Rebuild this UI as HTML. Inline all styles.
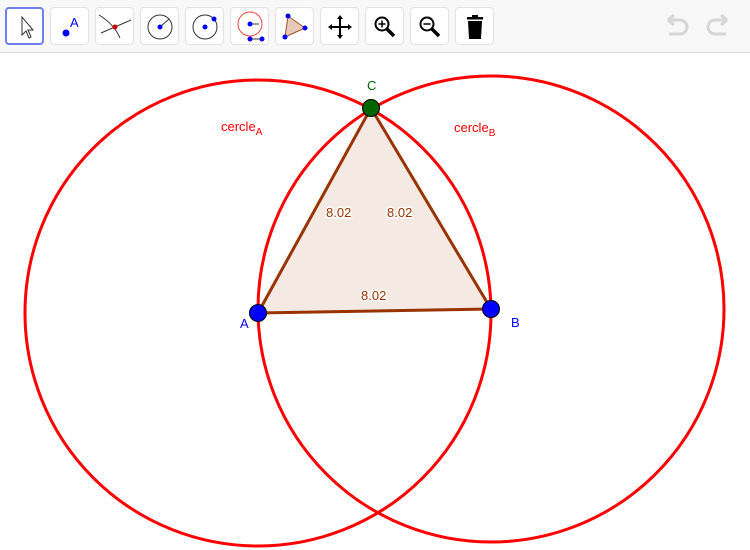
<!DOCTYPE html>
<html><head><style>
html,body{margin:0;padding:0;width:750px;height:550px;overflow:hidden;background:#fff;font-family:"Liberation Sans",sans-serif}
#tb{position:absolute;left:0;top:0;width:750px;height:52px;background:#f8f8f8;border-bottom:1px solid #ddd}
.b{position:absolute;top:7px;width:39px;height:38px;background:#fff;border:1px solid #e2e2e2;border-radius:4px;box-sizing:border-box}
.b svg{position:absolute;left:0;top:0}
</style></head><body>
<div id="tb">
<div class="b" style="left:5px;border:2px solid #6f7ff0"><svg width="36" height="35"><path d="M15 8 L15 26 L19 22 L22 29 L24 28 L21 21 L26 21 Z" fill="#fff" stroke="#333" stroke-width="1"/></svg></div>
<div class="b" style="left:50px"><svg width="38" height="37"><circle cx="15" cy="25" r="3.5" fill="#00f"/><text x="19" y="19" font-size="13" fill="#00f" font-family="Liberation Sans">A</text></svg></div>
<div class="b" style="left:95px"><svg width="38" height="37"><path d="M3 7 Q18 16 24 30" stroke="#333" fill="none"/><path d="M5 25 L35 12" stroke="#333"/><circle cx="19" cy="19" r="2.5" fill="#c00"/></svg></div>
<div class="b" style="left:140px"><svg width="38" height="37"><circle cx="19" cy="19" r="12" fill="none" stroke="#333"/><path d="M19 19 L28 11" stroke="#333"/><circle cx="19" cy="19" r="2.5" fill="#00f"/></svg></div>
<div class="b" style="left:185px"><svg width="38" height="37"><circle cx="19" cy="19" r="12" fill="none" stroke="#333"/><circle cx="19" cy="19" r="2.5" fill="#00f"/><circle cx="28" cy="11" r="2.5" fill="#00f"/></svg></div>
<div class="b" style="left:230px"><svg width="38" height="37"><circle cx="19" cy="16" r="12" fill="none" stroke="#f44"/><path d="M19 16 L28 16" stroke="#333"/><circle cx="19" cy="16" r="2.5" fill="#00f"/><path d="M19 31 L31 31" stroke="#333"/><circle cx="19" cy="31" r="2.5" fill="#00f"/><circle cx="31" cy="31" r="2.5" fill="#00f"/></svg></div>
<div class="b" style="left:275px"><svg width="38" height="37"><path d="M12 8 L29 20 L9 29 Z" fill="#e8c9b8" stroke="#a0522d"/><circle cx="12" cy="8" r="2.5" fill="#00f"/><circle cx="29" cy="20" r="2.5" fill="#00f"/><circle cx="9" cy="29" r="2.5" fill="#00f"/></svg></div>
<div class="b" style="left:320px"><svg width="38" height="37"><path d="M19 9 V29 M9 19 H29" stroke="#000" stroke-width="2"/><path d="M19 7 L16 11 H22Z M19 31 L16 27 H22Z M7 19 L11 16 V22Z M31 19 L27 16 V22Z" fill="#000"/></svg></div>
<div class="b" style="left:365px"><svg width="38" height="37"><circle cx="16" cy="16" r="6.5" fill="none" stroke="#000" stroke-width="2"/><path d="M12.5 16 H19.5 M16 12.5 V19.5" stroke="#000" stroke-width="1.5"/><path d="M21 21 L28 28" stroke="#000" stroke-width="3.5"/></svg></div>
<div class="b" style="left:410px"><svg width="38" height="37"><circle cx="16" cy="16" r="6.5" fill="none" stroke="#000" stroke-width="2"/><path d="M12.5 16 H19.5" stroke="#000" stroke-width="1.5"/><path d="M21 21 L28 28" stroke="#000" stroke-width="3.5"/></svg></div>
<div class="b" style="left:455px"><svg width="38" height="37"><rect x="11" y="9" width="16" height="2.5" fill="#000"/><rect x="16" y="7" width="6" height="3" fill="#000"/><path d="M12 13 H26 L25 31 H13 Z" fill="#000"/></svg></div>
<svg style="position:absolute;left:660px;top:12px" width="80" height="30"><path d="M8 8 H20 A7 7 0 0 1 20 22 H9 M8 8 L14 3 M8 8 L14 13" stroke="#d6d6d6" stroke-width="3" fill="none"/><path d="M67 8 H55 A7 7 0 0 0 55 22 H66 M67 8 L61 3 M67 8 L61 13" stroke="#d6d6d6" stroke-width="3" fill="none"/></svg>
</div>
<svg style="position:absolute;left:0;top:0" width="750" height="550">
<path d="M258 313 L491 309 L371 108 Z" fill="#f5e9e4" stroke="#993300" stroke-width="3" stroke-linejoin="round"/>
<circle cx="258" cy="313" r="233" fill="none" stroke="#f00" stroke-width="3"/>
<circle cx="491" cy="309" r="233" fill="none" stroke="#f00" stroke-width="3"/>
<circle cx="258" cy="313" r="8.5" fill="#00f" stroke="#000" stroke-width="1"/>
<circle cx="491" cy="309" r="8.5" fill="#00f" stroke="#000" stroke-width="1"/>
<circle cx="371" cy="108" r="8.5" fill="#006400" stroke="#000" stroke-width="1"/>
<g font-family="Liberation Sans" font-size="13">
<text x="367" y="90" fill="#006400">C</text>
<text x="240" y="328" fill="#00f">A</text>
<text x="511" y="327" fill="#00f">B</text>
<text x="221" y="131" fill="#f00">cercle<tspan font-size="10" dy="4">A</tspan></text>
<text x="454" y="132" fill="#f00">cercle<tspan font-size="10" dy="4">B</tspan></text>
<g fill="#993300" stroke="#fff" stroke-width="3" paint-order="stroke"><text x="326" y="217">8.02</text><text x="387" y="217">8.02</text><text x="361" y="300">8.02</text></g>
</g>
</svg>
</body></html>
